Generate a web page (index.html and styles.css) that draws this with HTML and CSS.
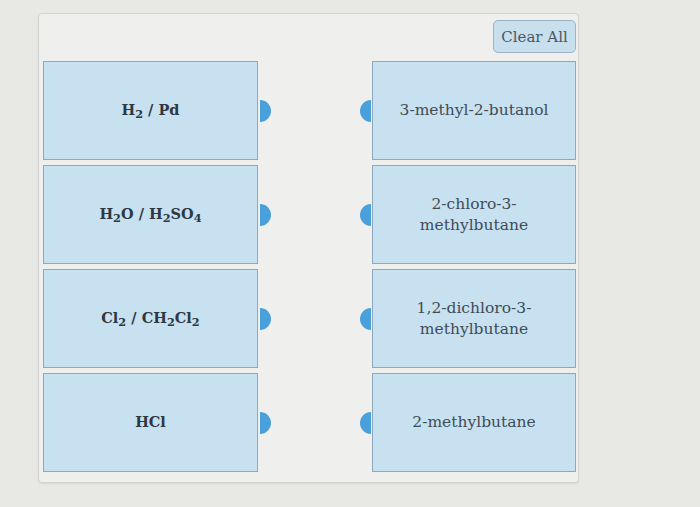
FILE: index.html
```html
<!DOCTYPE html>
<html lang="en">
<head>
  <meta charset="UTF-8">
  <title>Match reagents to products</title>
  <link rel="stylesheet" href="styles.css">
</head>
<body>
  <div class="panel">
    <div class="toolbar">
      <button class="clear-btn" type="button">Clear All</button>
    </div>

    <div class="board">
      <div class="row">
        <div class="card reagent"><span>H<sub>2</sub> / Pd</span></div>
        <span class="pin pin-out"></span>
        <span class="pin pin-in"></span>
        <div class="card product"><span>3-methyl-2-butanol</span></div>
      </div>

      <div class="row">
        <div class="card reagent"><span>H<sub>2</sub>O / H<sub>2</sub>SO<sub>4</sub></span></div>
        <span class="pin pin-out"></span>
        <span class="pin pin-in"></span>
        <div class="card product"><span>2-chloro-3-<br>methylbutane</span></div>
      </div>

      <div class="row">
        <div class="card reagent"><span>Cl<sub>2</sub> / CH<sub>2</sub>Cl<sub>2</sub></span></div>
        <span class="pin pin-out"></span>
        <span class="pin pin-in"></span>
        <div class="card product"><span>1,2-dichloro-3-<br>methylbutane</span></div>
      </div>

      <div class="row">
        <div class="card reagent"><span>HCl</span></div>
        <span class="pin pin-out"></span>
        <span class="pin pin-in"></span>
        <div class="card product"><span>2-methylbutane</span></div>
      </div>
    </div>
  </div>
</body>
</html>
```

FILE: styles.css
```css
* {
  box-sizing: border-box;
}

body {
  margin: 0;
  min-height: 100vh;
  background: #e8e8e5;
  font-family: "DejaVu Serif", "Liberation Serif", serif;
  color: #333d48;
}

.panel {
  margin: 13px 0 0 38px;
  width: 541px;
  padding: 6px 2px 10px 4px;
  background: #efefed;
  border: 1px solid #d3d4d2;
  border-radius: 4px;
  box-shadow: 0 1px 2px rgba(0, 0, 0, 0.08);
}

.toolbar {
  display: flex;
  justify-content: flex-end;
  margin-bottom: 8px;
}

.clear-btn {
  width: 83px;
  height: 33px;
  padding: 0;
  border: 1px solid #9db3c2;
  border-radius: 5px;
  background: #c8e0ee;
  color: #4b5763;
  font-family: inherit;
  font-size: 15px;
  cursor: pointer;
}

.board {
  display: flex;
  flex-direction: column;
  gap: 5px;
}

.row {
  display: flex;
  align-items: center;
  height: 99px;
}

.card {
  height: 100%;
  display: flex;
  align-items: center;
  justify-content: center;
  text-align: center;
  background: #c7e1f0;
  border: 1px solid #8ea9bd;
  line-height: 1.3;
}

.reagent {
  width: 215px;
  font-weight: bold;
  font-size: 14.5px;
  color: #2e3844;
}

.product {
  width: 204px;
  font-size: 15.5px;
  color: #414c57;
}

sub {
  font-size: 78%;
  line-height: 0;
  vertical-align: -0.3em;
}

/* half-disc handles on the facing edges */
.pin {
  width: 11px;
  height: 22px;
  background: #4aa0da;
}

.pin-out {
  margin-left: 2px;
  border-radius: 0 11px 11px 0;
}

.pin-in {
  margin-left: auto;
  margin-right: 1px;
  border-radius: 11px 0 0 11px;
}
```
